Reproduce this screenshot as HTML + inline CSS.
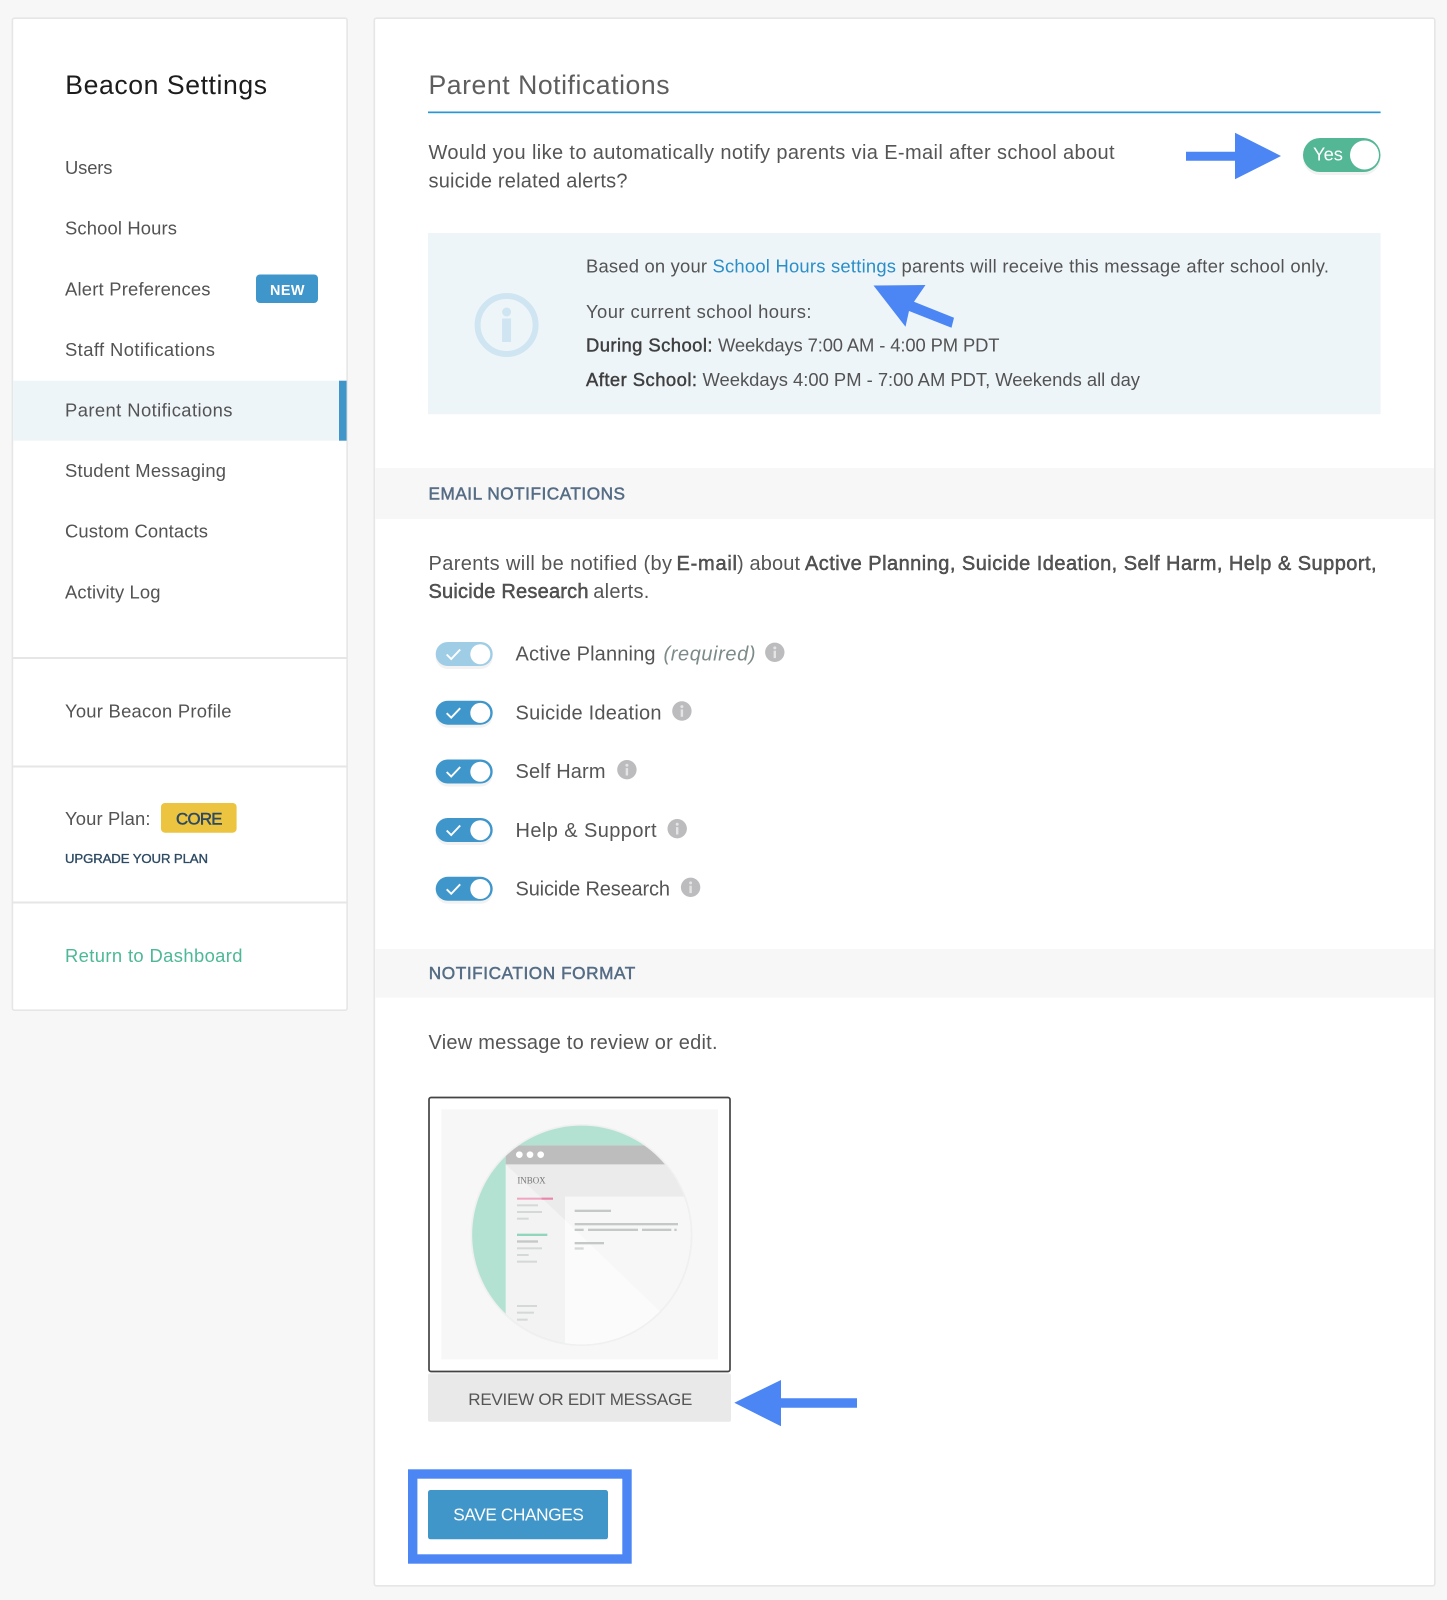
<!DOCTYPE html>
<html><head><meta charset="utf-8"><title>Beacon Settings</title>
<style>
html,body{margin:0;padding:0;background:#f7f7f7;width:1447px;height:1600px;overflow:hidden}
svg{display:block;position:absolute;left:0;top:0}
text{font-family:"Liberation Sans",sans-serif;fill:#4f4f4f;font-size:18.6px;white-space:pre}
.n{font-size:18.4px;fill:#535353}
.bold{font-weight:700}
.semi{stroke:#3f3f3f;stroke-width:.45;fill:#3f3f3f}
.h{font-size:17.2px;fill:#556c85;stroke:#556c85;stroke-width:.5}
.t{font-size:20px;fill:#555}
</style></head><body>
<svg width="1447" height="1600" viewBox="0 0 1447 1600" xmlns="http://www.w3.org/2000/svg">
<defs>
<g id="tg">
<rect x="0" y="3" width="57" height="24" rx="12" fill="#000" opacity=".05"/>
<rect x="0" y="0" width="57" height="24" rx="12" fill="currentColor"/>
<circle cx="44.6" cy="12.2" r="10" fill="#fff"/>
<path d="M11 12.5 L15.5 17 L24.5 7.5" fill="none" stroke="#fff" stroke-width="1.9"/>
</g>
<g id="ic">
<circle cx="0" cy="0" r="9.7" fill="#bcbcbe"/>
<circle cx="0" cy="-4.4" r="1.5" fill="#e4e4e4"/>
<rect x="-1.2" y="-1.6" width="2.4" height="7.4" fill="#e4e4e4"/>
</g>
<clipPath id="cc"><circle cx="484.5" cy="450" r="328"/></clipPath>
</defs>

<!-- sidebar card -->
<rect x="12.4" y="18.2" width="334.7" height="992" rx="2" fill="#fff" stroke="#e6e6e6" stroke-width="1.6"/>
<rect x="13.2" y="380.7" width="326" height="60" fill="#eef5f9"/>
<rect x="339" y="380.7" width="7.6" height="60" fill="#4096c9"/>
<rect x="13" y="657" width="334" height="2" fill="#e6e6e6"/>
<rect x="13" y="765.5" width="334" height="2" fill="#e6e6e6"/>
<rect x="13" y="901.5" width="334" height="2" fill="#e6e6e6"/>

<text x="65.3" y="94.2" style="font-size:26.6px;fill:#1c1c1c" textLength="201.7">Beacon Settings</text>
<text class="n" x="65" y="174" textLength="47.5">Users</text>
<text class="n" x="65" y="234.6" textLength="112">School Hours</text>
<text class="n" x="65" y="295.3" textLength="145.5">Alert Preferences</text>
<text class="n" x="65" y="356" textLength="150">Staff Notifications</text>
<text class="n" x="65" y="416.7" textLength="167.5">Parent Notifications</text>
<text class="n" x="65" y="477" textLength="161">Student Messaging</text>
<text class="n" x="65" y="537.6" textLength="143">Custom Contacts</text>
<text class="n" x="65" y="598.4" textLength="95.5">Activity Log</text>
<text class="n" x="65" y="717.7" textLength="166.5">Your Beacon Profile</text>
<text class="n" x="65" y="825" textLength="85.5">Your Plan:</text>
<text x="65" y="863" style="font-size:13.2px;fill:#2d4a63;stroke:#2d4a63;stroke-width:.35" textLength="143">UPGRADE YOUR PLAN</text>
<text x="65" y="962" style="font-size:18.4px;fill:#4db897" textLength="177.5">Return to Dashboard</text>

<rect x="256" y="274.5" width="62" height="28.5" rx="4" fill="#3f96cb"/>
<text class="bold" x="270" y="295" style="font-size:14.4px;fill:#fff" textLength="34.5">NEW</text>
<rect x="161" y="803" width="75.6" height="29.7" rx="4" fill="#ecc43f"/>
<text x="176" y="824.3" style="font-size:16.8px;fill:#2e4a62;stroke:#2e4a62;stroke-width:.5" textLength="46.5">CORE</text>

<!-- main card -->
<rect x="374.3" y="18.2" width="1060.5" height="1567.6" rx="2" fill="#fff" stroke="#e6e6e6" stroke-width="1.6"/>

<text x="428.5" y="94" style="font-size:26.6px;fill:#5e5e5e" textLength="241">Parent Notifications</text>
<rect x="428" y="111.5" width="952.6" height="1.7" fill="#2a96d3"/>

<text class="t" x="428.5" y="159" textLength="686">Would you like to automatically notify parents via E-mail after school about</text>
<text class="t" x="428.5" y="187.3" textLength="199">suicide related alerts?</text>

<path d="M1186 151.7H1235V132.7L1281 156L1235 179.3V160.7H1186Z" fill="#4c86f5"/>
<rect x="1303" y="141" width="77.5" height="34" rx="17" fill="#000" opacity=".05"/>
<rect x="1303" y="138" width="77.5" height="34" rx="17" fill="#53b795"/>
<circle cx="1364.5" cy="155" r="14.5" fill="#fff"/>
<text x="1313" y="160.7" style="font-size:18.4px;fill:#fff" textLength="30">Yes</text>

<!-- info box -->
<rect x="428" y="233" width="952.6" height="181.3" fill="#eef5f9"/>
<circle cx="506.6" cy="325" r="29" fill="none" stroke="#cfe5f1" stroke-width="6"/>
<circle cx="506.6" cy="312" r="4.5" fill="#cfe5f1"/>
<rect x="502.1" y="318.5" width="9" height="23.5" fill="#cfe5f1"/>

<text class="n" x="586" y="272.7" textLength="121">Based on your</text>
<text class="n" x="712.5" y="272.7" style="fill:#2a8ec8" textLength="183.5">School Hours settings</text>
<text class="n" x="901.5" y="272.7" textLength="427.5">parents will receive this message after school only.</text>
<text class="n" x="586" y="317.8" textLength="225.5">Your current school hours:</text>
<text class="n semi" x="586" y="351.7" textLength="126.5">During School:</text>
<text class="n" x="718" y="351.7" textLength="281.5">Weekdays 7:00 AM - 4:00 PM PDT</text>
<text class="n semi" x="586" y="386" textLength="111">After School:</text>
<text class="n" x="702.5" y="386" textLength="437.5">Weekdays 4:00 PM - 7:00 AM PDT, Weekends all day</text>

<path d="M873.5 285.5L925.5 285L914 301.7L954 317.7L951.5 327.7L909 311L905.5 326.7Z" fill="#4c86f5"/>

<!-- email band -->
<rect x="375.2" y="468" width="1058.8" height="51" fill="#f7f7f7"/>
<text class="h" x="428.5" y="499.5" textLength="196.5">EMAIL NOTIFICATIONS</text>
<text class="t" x="428.5" y="570" textLength="243.5">Parents will be notified (by</text>
<text class="t semi" x="676.5" y="570" textLength="60.5">E-mail</text>
<text class="t" x="737" y="570" textLength="63">) about</text>
<text class="t semi" x="805" y="570" textLength="571.6">Active Planning, Suicide Ideation, Self Harm, Help &amp; Support,</text>
<text class="t semi" x="428.5" y="598" textLength="160">Suicide Research</text>
<text class="t" x="593.3" y="598" textLength="56">alerts.</text>

<!-- toggles -->
<g color="#a0cde6"><use href="#tg" x="435.7" y="642"/></g>
<g color="#3f96cb"><use href="#tg" x="435.7" y="700.7"/></g>
<g color="#3f96cb"><use href="#tg" x="435.7" y="759.5"/></g>
<g color="#3f96cb"><use href="#tg" x="435.7" y="818"/></g>
<g color="#3f96cb"><use href="#tg" x="435.7" y="876.8"/></g>

<text class="t" x="515.5" y="660.7" textLength="140">Active Planning</text>
<text x="663.5" y="660.7" style="font-size:20px;font-style:italic;fill:#7d8a8a" textLength="92">(required)</text>
<text class="t" x="515.5" y="719.3" textLength="146">Suicide Ideation</text>
<text class="t" x="515.5" y="778" textLength="90">Self Harm</text>
<text class="t" x="515.5" y="837" textLength="141">Help &amp; Support</text>
<text class="t" x="515.5" y="895.3" textLength="154.5">Suicide Research</text>
<use href="#ic" x="774.8" y="652.3"/>
<use href="#ic" x="681.9" y="711"/>
<use href="#ic" x="626.9" y="769.7"/>
<use href="#ic" x="677.2" y="828.7"/>
<use href="#ic" x="690.6" y="887.3"/>

<!-- format band -->
<rect x="375.2" y="949" width="1058.8" height="48.7" fill="#f7f7f7"/>
<text class="h" x="428.8" y="979" textLength="206.5">NOTIFICATION FORMAT</text>
<text class="t" x="428.5" y="1049" textLength="289">View message to review or edit.</text>

<!-- preview frame -->
<rect x="429" y="1097.5" width="301" height="274" rx="2" fill="#fff" stroke="#444" stroke-width="1.7"/>
<g transform="translate(420 1085) scale(.33333)">
<rect x="64" y="73" width="830" height="750" fill="#f7f7f7"/>
<circle cx="484.5" cy="450" r="333" fill="#f0f0f0"/>
<g clip-path="url(#cc)">
<rect x="150" y="110" width="680" height="680" fill="#b4e2d2"/>
<rect x="257" y="181" width="600" height="620" fill="#f3f3f3"/>
<path d="M257 238H860V335H435V405Z" fill="#ebebeb"/>
<rect x="435" y="335" width="420" height="460" fill="#f7f7f7"/>
<path d="M435 405L720 680L700 800H435Z" fill="#fbfbfb"/>
<path d="M257 189a8 8 0 0 1 8-8H860V238H257Z" fill="#bdbdbe"/>
<circle cx="298" cy="209" r="10" fill="#fff"/>
<circle cx="330" cy="209" r="10" fill="#fff"/>
<circle cx="362" cy="209" r="10" fill="#fff"/>
</g>
<text x="292" y="295" style="font-family:'Liberation Serif',serif;font-size:27px;fill:#777" textLength="85">INBOX</text>
<rect x="291" y="338" width="108" height="6" fill="#f0a5c0"/>
<rect x="365" y="338" width="34" height="6" fill="#e887a9"/>
<rect x="291" y="358" width="63" height="6" fill="#d5d8d8"/>
<rect x="291" y="378" width="75" height="6" fill="#d5d8d8"/>
<rect x="291" y="398" width="35" height="6" fill="#d5d8d8"/>
<rect x="291" y="446" width="91" height="7" fill="#8fd6bd"/>
<rect x="291" y="466" width="63" height="7" fill="#c4c8c8"/>
<rect x="291" y="487" width="75" height="6" fill="#d5d8d8"/>
<rect x="291" y="507" width="35" height="6" fill="#d5d8d8"/>
<rect x="291" y="527" width="60" height="6" fill="#d5d8d8"/>
<rect x="291" y="660" width="60" height="6" fill="#d5d8d8"/>
<rect x="291" y="680" width="51" height="6" fill="#d5d8d8"/>
<rect x="291" y="701" width="32" height="6" fill="#d5d8d8"/>
<rect x="464" y="374" width="109" height="7" fill="#c4c8c8"/>
<rect x="464" y="414" width="310" height="7" fill="#c4c8c8"/>
<rect x="464" y="431" width="27" height="7" fill="#c4c8c8"/>
<rect x="504" y="431" width="150" height="7" fill="#c4c8c8"/>
<rect x="666" y="431" width="88" height="7" fill="#c4c8c8"/>
<rect x="763" y="431" width="7" height="7" fill="#c4c8c8"/>
<rect x="464" y="471" width="88" height="7" fill="#c4c8c8"/>
<rect x="464" y="487" width="27" height="7" fill="#d5d8d8"/>
</g>

<!-- review button -->
<rect x="428" y="1373.5" width="303" height="48.2" rx="2" fill="#e9e9e9"/>
<text x="468.3" y="1405" style="font-size:17px;fill:#555" textLength="224">REVIEW OR EDIT MESSAGE</text>
<path d="M734.3 1402.7L781 1380V1398.3H857V1407.7H781V1426.3Z" fill="#4c86f5"/>

<!-- save -->
<rect x="412.7" y="1474" width="214.3" height="85" fill="none" stroke="#4c86f5" stroke-width="9.4"/>
<rect x="428" y="1490" width="180" height="49.3" rx="2.5" fill="#4096c9"/>
<text x="453.3" y="1520.7" style="font-size:17.2px;fill:#fff" textLength="130.5">SAVE CHANGES</text>
</svg>
</body></html>
